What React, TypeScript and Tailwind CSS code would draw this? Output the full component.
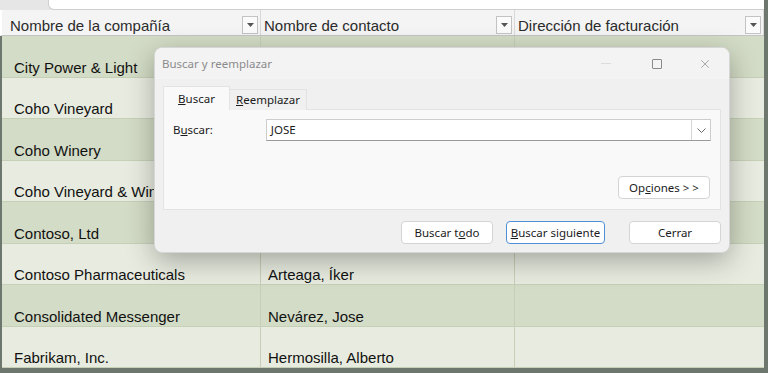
import { X } from 'lucide-react';

const ROWS = [
  { company: 'City Power & Light', contact: '', dark: true },
  { company: 'Coho Vineyard', contact: '', dark: false },
  { company: 'Coho Winery', contact: '', dark: true },
  { company: 'Coho Vineyard & Winery', contact: '', dark: false },
  { company: 'Contoso, Ltd', contact: '', dark: true },
  { company: 'Contoso Pharmaceuticals', contact: 'Arteaga, Íker', dark: false },
  { company: 'Consolidated Messenger', contact: 'Nevárez, Jose', dark: true },
  { company: 'Fabrikam, Inc.', contact: 'Hermosilla, Alberto', dark: false },
];

const HEADERS = [
  { label: 'Nombre de la compañía', cls: 'w-[259px] pl-[8px]' },
  { label: 'Nombre de contacto', cls: 'w-[254px] pl-[3px]' },
  { label: 'Dirección de facturación', cls: 'flex-1 pl-[3px]' },
];

function FilterButton() {
  return (
    <div className="w-[16px] h-[18px] border border-[#c3c3c3] bg-[#fbfbfb] flex items-center justify-center shrink-0">
      <svg width="7" height="4" viewBox="0 0 7 4">
        <path d="M0 0h7L3.5 4z" fill="#555" />
      </svg>
    </div>
  );
}

function DialogButton({ children, primary }: { children: React.ReactNode; primary?: boolean }) {
  return (
    <button
      className={`h-[23px] rounded-[4px] bg-white text-[11.5px] text-[#1b1b1b] flex items-center justify-center ${
        primary ? 'border border-[#4f8fd6] w-[99px]' : 'border border-[#d4d4d4] w-[92px]'
      }`}
    >
      {children}
    </button>
  );
}

function FindReplaceDialog() {
  return (
    <div
      className="absolute left-[154px] top-[47px] w-[576px] h-[206px] rounded-[8px] bg-[#f0f0f0] border border-[#d6d6d6] shadow-[0_8px_28px_rgba(0,0,0,0.3)] overflow-hidden flex flex-col"
      style={{ fontFamily: '"Noto Sans", "Open Sans", sans-serif' }}
    >
      <div className="h-[31px] bg-[#f3f3f3] flex items-center pl-[7px] shrink-0">
        <span className="text-[11.5px] text-[#8b8b8b]">Buscar y reemplazar</span>
        <div className="ml-auto flex items-center h-full">
          <div className="w-[54px] flex justify-center">
            <div className="w-[10px] h-px bg-[#dcdcdc]" />
          </div>
          <div className="w-[48px] flex justify-center">
            <div className="w-[10px] h-[10px] border border-[#8a8a8a] rounded-[1px]" />
          </div>
          <div className="w-[48px] flex justify-center">
            <X size={14} strokeWidth={1.2} color="#8a8a8a" />
          </div>
        </div>
      </div>

      <div className="flex-1 px-[8px] pt-[8px]">
        <div className="flex items-end h-[23px] relative z-10">
          <div className="w-[67px] h-[24px] bg-[#f9f9f9] border border-b-0 border-[#e3e3e3] flex items-center justify-center text-[11.5px] text-[#1b1b1b]">
            <span>
              <u>B</u>uscar
            </span>
          </div>
          <div className="w-[77px] h-[21px] bg-[#f0f0f0] border border-l-0 border-b-0 border-[#e3e3e3] flex items-center justify-center text-[11.5px] text-[#1b1b1b]">
            <span>
              <u>R</u>eemplazar
            </span>
          </div>
        </div>
        <div className="h-[101px] w-[558px] bg-[#f9f9f9] border border-[#e3e3e3] -mt-px flex flex-col px-[9px] pt-[9px] pb-[10px]">
          <div className="flex items-center h-[22px]">
            <span className="w-[93px] text-[11.5px] text-[#1b1b1b]">
              B<u>u</u>scar:
            </span>
            <div className="w-[446px] h-[22px] bg-white border border-[#cdcdcd] border-b-[#9a9a9a] flex items-center">
              <span className="pl-[4px] text-[11.5px] text-[#1b1b1b] flex-1">JOSE</span>
              <div className="w-[19px] h-[20px] border-l border-[#d6d6d6] flex items-center justify-center">
                <svg width="9" height="5" viewBox="0 0 9 5">
                  <path d="M0.5 0.5L4.5 4.5L8.5 0.5" stroke="#6a6a6a" fill="none" strokeWidth="1" />
                </svg>
              </div>
            </div>
          </div>
          <div className="mt-auto flex justify-end pr-[1px]">
            <DialogButton>
              <span>
                Op<u>c</u>iones &gt; &gt;
              </span>
            </DialogButton>
          </div>
        </div>
        <div className="flex justify-end items-center gap-[13px] mt-[11px]">
          <DialogButton>
            <span>
              Buscar t<u>o</u>do
            </span>
          </DialogButton>
          <div className="mr-[11px]">
            <DialogButton primary>
              <span>
                <u>B</u>uscar siguiente
              </span>
            </DialogButton>
          </div>
          <DialogButton>Cerrar</DialogButton>
        </div>
      </div>
    </div>
  );
}

export default function App() {
  return (
    <div
      className="w-[768px] h-[373px] relative overflow-hidden bg-[#e6e6e6] border-r-[4px] border-b-[5px] border-[#6e776e] flex flex-col"
      style={{ fontFamily: '"Liberation Sans", Arial, sans-serif' }}
    >
      <div className="h-[10px] flex shrink-0">
        <div className="w-[48px]" />
        <div className="flex-1 bg-white border-l border-b border-[#cfcfcf] rounded-bl-[6px]" />
      </div>

      <div className="h-[26px] flex bg-[#f4f4f4] border-b border-[#c4c4c4] border-l-2 border-l-[#ffffff] shrink-0">
        {HEADERS.map((h) => (
          <div key={h.label} className={`${h.cls} flex items-end justify-between pb-[1px] pr-[2px] border-r border-[#d9d9d9]`}>
            <span className="text-[15px] leading-[15px] pb-[1px] text-[#2b2b2b] whitespace-nowrap">{h.label}</span>
            <FilterButton />
          </div>
        ))}
      </div>

      <div className="flex-1 flex flex-col border-l-2 border-[#6e776e]">
        {ROWS.map((r, i) => (
          <div
            key={i}
            className={`flex-1 flex border-b border-[#c6d0b6] ${r.dark ? 'bg-[#d3dcc6]' : 'bg-[#e8ece0]'}`}
          >
            <div className="w-[259px] flex items-end pb-[2px] pl-[12px] border-r border-[#c6d0b6]">
              <span className="text-[15px] leading-[15px] text-[#111] whitespace-nowrap">{r.company}</span>
            </div>
            <div className="w-[254px] flex items-end pb-[2px] pl-[7px] border-r border-[#c6d0b6]">
              <span className="text-[15px] leading-[15px] text-[#111] whitespace-nowrap">{r.contact}</span>
            </div>
            <div className="flex-1" />
          </div>
        ))}
      </div>

      <FindReplaceDialog />
    </div>
  );
}
